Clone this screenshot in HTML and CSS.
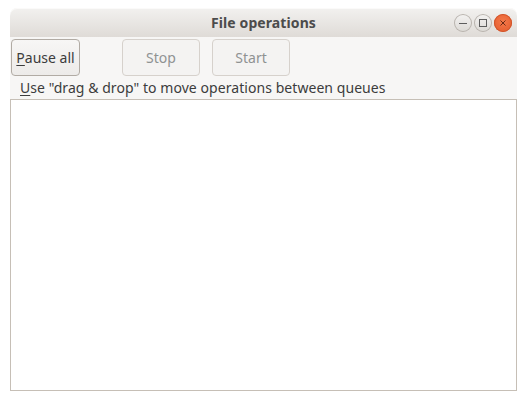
FILE: index.html
```html
<!DOCTYPE html>
<html>
<head>
<meta charset="utf-8">
<link rel="stylesheet" href="styles.css">
</head>
<body>
<div class="window">
  <div class="titlebar">
    <span class="title">File operations</span>
    <div class="controls">
      <span class="ctl">
        <svg width="18" height="18" viewBox="0 0 18 18"><line x1="5" y1="9.5" x2="13" y2="9.5" stroke="#5d5d5d" stroke-width="1"/></svg>
      </span>
      <span class="ctl">
        <svg width="18" height="18" viewBox="0 0 18 18"><rect x="5.5" y="5.5" width="7" height="7" fill="none" stroke="#5d5d5d" stroke-width="1"/></svg>
      </span>
      <span class="ctl close">
        <svg width="18" height="18" viewBox="0 0 18 18"><path d="M6.5 6.5 L11.5 11.5 M11.5 6.5 L6.5 11.5" stroke="#6a2a16" stroke-width="1"/></svg>
      </span>
    </div>
  </div>
  <div class="content">
    <div class="toolbar">
      <button class="btn pause"><u>P</u>ause all</button>
      <button class="btn disabled stop">Stop</button>
      <button class="btn disabled start">Start</button>
    </div>
    <div class="hint"><u>U</u>se "drag &amp; drop" to move operations between queues</div>
    <div class="list"></div>
  </div>
</div>
</body>
</html>
```
FILE: styles.css
```css
html, body {
  margin: 0;
  padding: 0;
  background: #ffffff;
}
body {
  font-family: "Noto Sans", "DejaVu Sans", sans-serif;
  width: 527px;
  height: 401px;
  overflow: hidden;
}
.window {
  margin: 8px 0 0 10px;
  width: 507px;
}
.titlebar {
  height: 29px;
  border-radius: 7px 7px 0 0;
  background: linear-gradient(#f2f1ef, #dfdbd7);
  box-shadow: inset 0 1px 0 #fbfaf9;
  position: relative;
  display: flex;
  align-items: center;
  justify-content: center;
}
.title {
  font-weight: bold;
  font-size: 14px;
  color: #4c4c4c;
  letter-spacing: 0.1px;
  margin-top: -1px;
}
.controls {
  position: absolute;
  right: 5px;
  top: 6px;
  display: flex;
  gap: 2px;
}
.ctl {
  width: 18px;
  height: 18px;
  border-radius: 50%;
  background: linear-gradient(#f4f3f2, #dcd9d5);
  box-shadow: inset 0 0 0 1px #b9b4ae;
  display: block;
}
.ctl svg { display: block; }
.close {
  background: radial-gradient(circle at 50% 40%, #f4794a, #e3582a);
  box-shadow: inset 0 0 0 1px #d0552b;
}
.content {
  background: #f7f6f5;
  display: flex;
  flex-direction: column;
}
.toolbar {
  display: flex;
  padding-top: 2px;
  height: 37px;
}
.btn {
  font-family: "Noto Sans", "DejaVu Sans", sans-serif;
  font-size: 14px;
  height: 37px;
  border-radius: 4px;
  border: 1px solid #c4bdb6;
  background: linear-gradient(#f7f6f5, #edebe9);
  color: #3c3c3c;
  padding: 0;
}
.btn u { text-decoration-thickness: 1px; text-underline-offset: 2px; }
.pause {
  margin-left: 1px;
  width: 69px;
  border-color: #b1aba4;
}
.disabled {
  color: #8f9292;
  border-color: #d6d1cc;
  background: #f4f3f2;
  width: 78px;
}
.stop { margin-left: 42px; }
.start { margin-left: 12px; }
.hint {
  font-size: 14px;
  color: #3c3c3c;
  padding-left: 10px;
  height: 23px;
  line-height: 24px;
  letter-spacing: 0.06px;
  white-space: nowrap;
}
.hint u { text-underline-offset: 2px; }
.list {
  height: 290px;
  border: 1px solid #c6bfb6;
  background: #ffffff;
}
```
